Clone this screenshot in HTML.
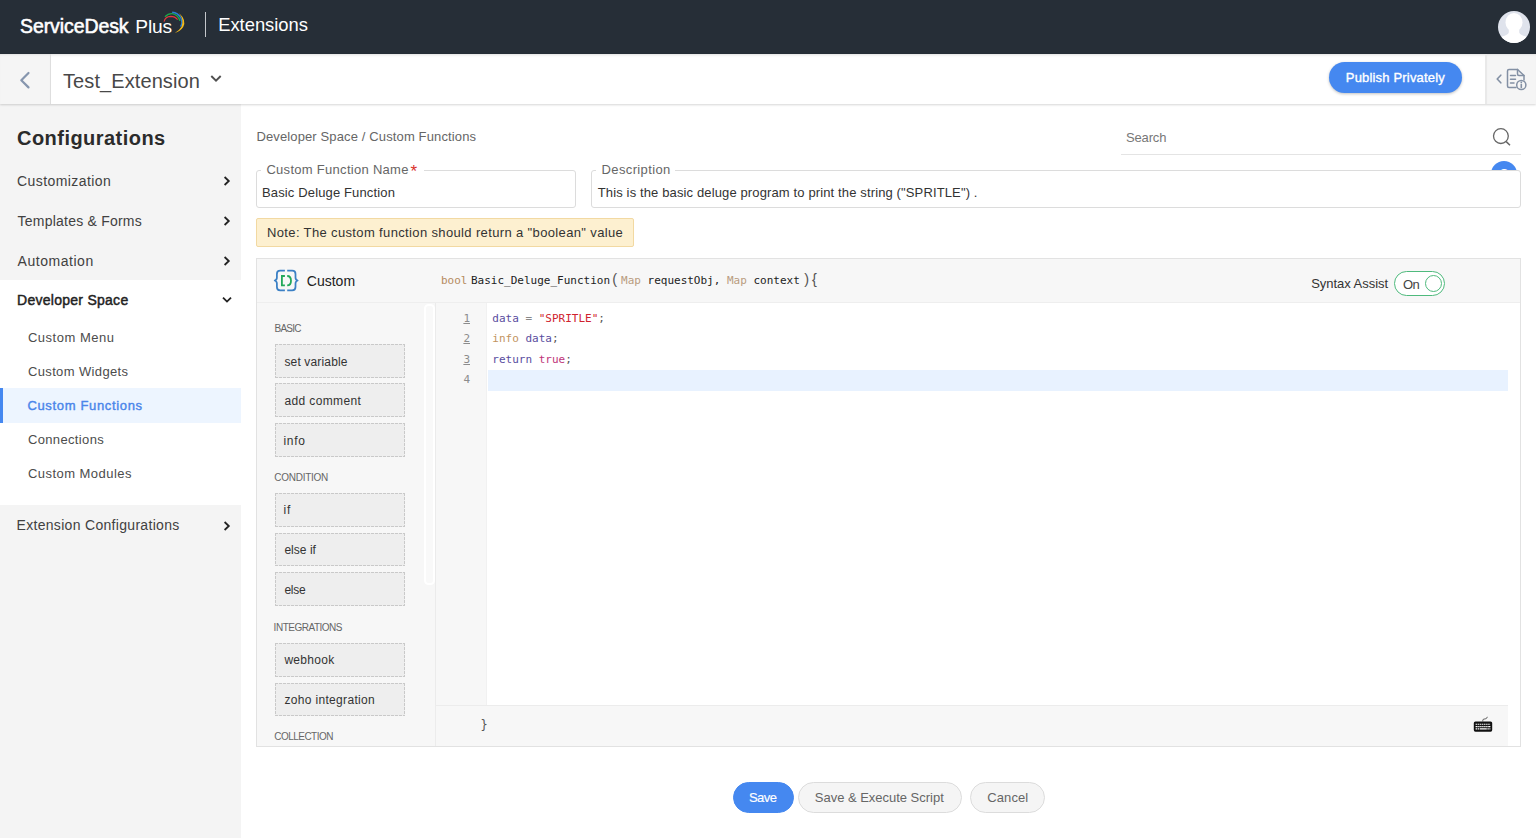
<!DOCTYPE html>
<html lang="en">
<head>
<meta charset="utf-8">
<title>ServiceDesk Plus - Extensions</title>
<style>
*{box-sizing:border-box;margin:0;padding:0}
html,body{width:1536px;height:838px;overflow:hidden;background:#fff}
body{font-family:"Liberation Sans",sans-serif;font-size:13px;color:#333;position:relative}
.abs{position:absolute}
.t{position:absolute;white-space:nowrap;line-height:1}
/* header */
#hdr{position:absolute;left:0;top:0;width:1536px;height:54px;background:#262e37}
#t-sd{left:20px;top:16px;font-size:19.5px;color:#fff;-webkit-text-stroke:.55px #fff}
#t-plus{left:135px;top:16px;font-size:19.2px;color:#fff}
#hdr .div{position:absolute;left:204.7px;top:12px;width:1.4px;height:25px;background:#c4c7cb}
#t-ext{left:218px;top:15px;font-size:18.4px;color:#fff}
#avatar{position:absolute;left:1498px;top:11px;width:32px;height:32px;border-radius:50%;background:#dfe3ec;overflow:hidden}
/* subheader */
#sub{position:absolute;left:0;top:54px;width:1536px;height:50px;background:#fff;box-shadow:0 1px 2px rgba(0,0,0,.16),inset 0 3px 3px -2px rgba(0,0,0,.13);z-index:5}
#back{position:absolute;left:0;top:0;width:51px;height:50px;background:#f5f5f5;border-right:1px solid #dedede;box-shadow:inset 0 2px 2px -1px rgba(0,0,0,.08)}
#t-title{left:63px;top:16px;font-size:20px;color:#484848}
#pub{position:absolute;left:1329px;top:8px;width:133px;height:31px;border-radius:16px;background:#4588f0;box-shadow:0 1px 3px rgba(0,0,0,.25)}
#t-pub{left:16px;top:9px;font-size:13px;color:#fff;-webkit-text-stroke:.35px #fff}
#rpanel{position:absolute;left:1485px;top:0;width:51px;height:50px;background:#f5f5f5;border-left:2px solid #e9e9e9;box-shadow:inset 0 2px 2px -1px rgba(0,0,0,.08)}
/* sidebar */
#side{position:absolute;left:0;top:104px;width:241px;height:734px;padding-top:1px;background:#f4f4f4}
#t-conf{left:17px;top:24px;font-size:20px;font-weight:bold;color:#2b2b2b}
#side .m{left:17px;font-size:14px;color:#414141}
#side .s{left:28px;font-size:13px;color:#4c4c4c}
#side .white{position:absolute;left:0;top:176px;width:241px;height:225px;background:#fff}
#side .act{position:absolute;left:0;top:284px;width:241px;height:34.5px;background:#edf5ff;border-left:3px solid #4588f0}
.chev{position:absolute;left:221px;width:12px;height:12px}
/* main */
#main{position:absolute;left:241px;top:105px;width:1295px;height:733px;background:#fff}
#t-bc{left:15px;top:26px;font-size:13px;color:#666}
#t-srch{left:885px;top:26px;font-size:13px;color:#777}
#sline{position:absolute;left:880px;top:49px;width:400px;height:1px;background:#e4e4e4}
.fs{position:absolute;top:65px;height:38px;border:1px solid #dcdcdc;border-radius:3px;background:#fff}
.lg{position:absolute;top:-9px;left:4px;height:16px;background:#fff;font-size:13px;color:#666}
.lg .t{left:6px;top:1.5px}
.lg b.t{color:#d9302c;font-weight:normal;font-size:17px;left:149.5px;top:1px}
.fv{left:5px;top:16px;font-size:13px;color:#333}
#help{position:absolute;left:1250px;top:56px;width:26px;height:26px;border-radius:50%;background:#4588f0;color:#fff;font-size:15px;font-weight:bold;text-align:center;line-height:26px}
#note{position:absolute;left:15px;top:113px;width:378px;height:29px;background:#fdf0d0;border:1px solid #f2d9a2;border-radius:2px}
#t-note{left:10px;top:7px;font-size:13px;color:#333}
#ed{position:absolute;left:15px;top:153px;width:1265px;height:489px;border:1px solid #e2e2e2;background:#fff}
#edh{position:absolute;left:0;top:0;width:1263px;height:44px;background:#f7f7f7;border-bottom:1px solid #eee}
#t-cust{left:50px;top:14px;font-size:14px;color:#222}
.mono{font-family:"DejaVu Sans Mono","Liberation Mono",monospace;font-size:11px}
#sig{position:absolute;left:184px;top:13.2px;line-height:14px;white-space:nowrap;color:#222}
#sig i{font-style:normal}
.kw{color:#b58a5e}.ty{color:#b99c80}.pn{color:#555;font-size:14.5px;font-family:"Liberation Sans",sans-serif}
#t-sa{left:1054px;top:17px;font-size:13px;color:#333}
#tog{position:absolute;left:1137px;top:12px;width:51px;height:25px;border:1px solid #4fba7d;border-radius:13px;background:#fff}
#t-on{left:8px;top:6px;font-size:13px;color:#444}
#tog i{position:absolute;left:30px;top:3px;width:17px;height:17px;border:1px solid #4fba7d;border-radius:50%;background:#fff}
#pal{position:absolute;left:0;top:44px;width:178px;height:443px;background:#f7f7f7;overflow:hidden}
#pal .gl{left:17px;font-size:10px;color:#666}
#pal .it{position:absolute;left:18px;width:130px;height:33.5px;background:repeating-linear-gradient(90deg,#c9c9c9 0 2.6px,transparent 2.6px 4px) 0 0/100% 1px no-repeat,repeating-linear-gradient(90deg,#c9c9c9 0 2.6px,transparent 2.6px 4px) 0 100%/100% 1px no-repeat,repeating-linear-gradient(180deg,#c9c9c9 0 2.6px,transparent 2.6px 4px) 0 0/1px 100% no-repeat,repeating-linear-gradient(180deg,#c9c9c9 0 2.6px,transparent 2.6px 4px) 100% 0/1px 100% no-repeat,#eee}
#pal .it .t{left:9px;top:11px;font-size:12px;color:#333}
#strack{position:absolute;left:166.5px;top:.5px;width:11.5px;height:281px;background:#f9f9f9;border:2px solid #fff;border-radius:4.5px}
#gut{position:absolute;left:178px;top:44px;width:52px;height:403px;background:#f7f7f7;border-left:1px solid #ebebeb;border-right:1px solid #f1f1f1}
#gut span{position:absolute;right:16px;color:#8c8c8c;line-height:13px}
#gut u{text-decoration:underline;text-underline-offset:.6px}
#code{position:absolute;left:230px;top:44px;width:1021px;height:403px;background:#fff}
#code .ln{position:absolute;left:5.3px;line-height:13px;white-space:nowrap}
#code .hl{position:absolute;left:1px;top:67px;width:1020px;height:20.8px;background:#e8f2ff}
#edf{position:absolute;left:178px;top:446px;width:1073px;height:41px;background:#f7f7f7;border-top:1px solid #ececec;border-left:1px solid #ececec}
.btn{position:absolute;top:677px;height:31px;border-radius:16px;border:1px solid #dcdcdc;background:#f5f5f5}
.btn .t{top:8px;font-size:13px;color:#666}

#t-sd{letter-spacing:-0.09px;margin-left:0.0px;margin-top:0.8px}
#t-plus{letter-spacing:-0.20px;margin-left:0.3px;margin-top:0.8px}
#t-ext{letter-spacing:-0.02px;margin-left:0.2px;margin-top:1.0px}
#t-title{letter-spacing:0.09px;margin-left:0.0px;margin-top:0.5px}
#t-pub{letter-spacing:0.18px;margin-left:0.8px;margin-top:0.0px}
#t-conf{letter-spacing:0.46px;margin-left:0.0px;margin-top:-0.1px}
#t-m1{letter-spacing:0.43px;margin-left:0.0px;margin-top:1.0px}
#t-m2{letter-spacing:0.23px;margin-left:0.5px;margin-top:1.0px}
#t-m3{letter-spacing:0.54px;margin-left:0.5px;margin-top:0.6px}
#t-m4{letter-spacing:0.27px;margin-left:0.0px;margin-top:0.8px}
#t-s1{letter-spacing:0.51px;margin-left:-0.1px;margin-top:1.5px}
#t-s2{letter-spacing:0.37px;margin-left:-0.1px;margin-top:1.5px}
#t-s3{letter-spacing:0.66px;margin-left:-0.6px;margin-top:1.7px}
#t-s4{letter-spacing:0.36px;margin-left:-0.1px;margin-top:1.0px}
#t-s5{letter-spacing:0.46px;margin-left:-0.1px;margin-top:1.5px}
#t-m5{letter-spacing:0.31px;margin-left:-0.5px;margin-top:1.1px}
#t-bc{letter-spacing:0.13px;margin-left:0.4px;margin-top:-0.6px}
#t-srch{letter-spacing:-0.15px;margin-left:0.0px;margin-top:-0.3px}
#t-lg1{letter-spacing:0.29px;margin-left:-0.6px;margin-top:-0.3px}
#t-fv1{letter-spacing:0.14px;margin-left:0.0px;margin-top:-1.1px}
#t-lg2{letter-spacing:0.36px;margin-left:-0.4px;margin-top:-0.2px}
#t-fv2{letter-spacing:0.13px;margin-left:0.8px;margin-top:-1.1px}
#t-note{letter-spacing:0.36px;margin-left:0.0px;margin-top:-0.3px}
#t-cust{letter-spacing:0.00px;margin-left:-0.2px;margin-top:1.0px}
#t-sa{letter-spacing:-0.03px;margin-left:0.2px;margin-top:0.5px}
#t-on{letter-spacing:-0.72px;margin-left:0.0px;margin-top:-0.2px}
#t-g1{letter-spacing:-0.81px;margin-left:0.6px;margin-top:1.6px}
#t-g2{letter-spacing:-0.25px;margin-left:0.2px;margin-top:1.9px}
#t-g3{letter-spacing:-0.49px;margin-left:-0.4px;margin-top:2.0px}
#t-g4{letter-spacing:-0.52px;margin-left:0.2px;margin-top:1.6px}
#t-i1{letter-spacing:0.16px;margin-left:0.4px;margin-top:0.8px}
#t-i2{letter-spacing:0.38px;margin-left:0.4px;margin-top:0.9px}
#t-i3{letter-spacing:0.72px;margin-left:-0.6px;margin-top:0.5px}
#t-i4{letter-spacing:0.90px;margin-left:-0.6px;margin-top:0.3px}
#t-i5{letter-spacing:0.03px;margin-left:0.4px;margin-top:0.1px}
#t-i6{letter-spacing:-0.27px;margin-left:0.4px;margin-top:0.5px}
#t-i7{letter-spacing:0.30px;margin-left:0.4px;margin-top:0.4px}
#t-i8{letter-spacing:0.33px;margin-left:0.4px;margin-top:0.7px}
#t-b1{letter-spacing:-0.59px;margin-left:-1.0px;margin-top:0.0px}
#t-b2{letter-spacing:-0.02px;margin-left:-0.2px;margin-top:0.0px}
#t-b3{letter-spacing:0.11px;margin-left:-0.8px;margin-top:0.0px}
</style>
</head>
<body>
<div id="hdr">
  <span class="t" id="t-sd">ServiceDesk</span><span class="t" id="t-plus">Plus</span>
  <svg class="abs" style="left:160px;top:8px" width="30" height="30" viewBox="160 8 30 30"><path d="M164 21.6 Q165.3 16.6 170.8 16.4 Q175 16.4 177.6 19.6" fill="none" stroke="#e8383d" stroke-width="1.1"/><path d="M165 16.7 Q168 13.4 172.2 13.6 Q178.2 14.6 180 20.9" fill="none" stroke="#1da64a" stroke-width="1.4"/><path d="M172.2 12.3 Q178 12.8 180.9 18 Q183 23 180.6 26.6" fill="none" stroke="#2a7fd4" stroke-width="1.4"/><path d="M179 12.9 Q186.8 20 183.2 27 Q180.2 31.6 174.8 33 Q179.4 30.4 181.6 26.4 Q184.2 20 179 12.9Z" fill="#f2b91a"/></svg>
  <div class="div"></div>
  <span class="t" id="t-ext">Extensions</span>
  <div id="avatar"><svg width="32" height="32" viewBox="0 0 32 32"><ellipse cx="16" cy="11.4" rx="8.5" ry="9.3" fill="#fff"/><path d="M10.8 18 L10.8 21.5 Q10 24.2 4 25.6 L1 27 L1 34 L31 34 L31 27 L28 25.6 Q22 24.2 21.2 21.5 L21.2 18 Z" fill="#fff"/></svg></div>
</div>
<div id="sub">
  <div id="back"><svg class="abs" style="left:18px;top:15px" width="14" height="22" viewBox="0 0 14 22"><path d="M10.5 4 L3.3 11.2 L10.5 18.4" fill="none" stroke="#8696ae" stroke-width="2.2" stroke-linecap="round" stroke-linejoin="round"/></svg></div>
  <span class="t" id="t-title">Test_Extension</span>
  <svg class="abs" style="left:208.5px;top:20px" width="14" height="10" viewBox="0 0 14 10"><path d="M2.3 2 L7 6.7 L11.7 2" fill="none" stroke="#505050" stroke-width="1.9"/></svg>
  <div id="pub"><span class="t" id="t-pub">Publish Privately</span></div>
  <div id="rpanel"><svg class="abs" style="left:6.3px;top:12.4px" width="36" height="26" viewBox="0 0 36 26"><g fill="none" stroke="#8390a4" stroke-width="1.5" stroke-linejoin="round" stroke-linecap="round"><path d="M7.8 9.2 L4.2 13 L7.8 16.8" stroke-width="1.6"/><path d="M24.5 3.5 H16 Q14.5 3.5 14.5 5 V20 Q14.5 21.5 16 21.5 H23"/><path d="M24.5 3.5 L31 9.5 V14"/><path d="M24.5 3.5 V8 Q24.5 9.5 26 9.5 H31"/><path d="M17.5 9.5 H22.5 M17.5 13.2 H22.5 M17.5 17 H21"/><circle cx="28.3" cy="19" r="4.6" fill="#f5f5f5"/><path d="M28.3 18.5 V21.5" stroke-width="1.6"/><path d="M28.3 16.3 V16.4" stroke-width="1.7"/></g></svg></div>
</div>
<div id="side">
  <span class="t" id="t-conf">Configurations</span>
  <span class="t m" id="t-m1" style="top:69px">Customization</span>
  <span class="t m" id="t-m2" style="top:109px">Templates &amp; Forms</span>
  <span class="t m" id="t-m3" style="top:149px">Automation</span>
  <div class="white"></div>
  <svg class="chev" style="top:70.6px" viewBox="0 0 12 12"><path d="M3.6 2 L7.8 6 L3.6 10" fill="none" stroke="#222" stroke-width="1.8"/></svg>
  <svg class="chev" style="top:110.6px" viewBox="0 0 12 12"><path d="M3.6 2 L7.8 6 L3.6 10" fill="none" stroke="#222" stroke-width="1.8"/></svg>
  <svg class="chev" style="top:150.7px" viewBox="0 0 12 12"><path d="M3.6 2 L7.8 6 L3.6 10" fill="none" stroke="#222" stroke-width="1.8"/></svg>
  <svg class="chev" style="top:415.5px" viewBox="0 0 12 12"><path d="M3.6 2 L7.8 6 L3.6 10" fill="none" stroke="#222" stroke-width="1.8"/></svg>
  <svg class="chev" style="top:190.4px" viewBox="0 0 12 12"><path d="M2 3.6 L6 7.6 L10 3.6" fill="none" stroke="#222" stroke-width="1.8"/></svg>
  <span class="t m" id="t-m4" style="top:188px;-webkit-text-stroke:.45px #222;color:#222">Developer Space</span>
  <span class="t s" id="t-s1" style="top:225px">Custom Menu</span>
  <span class="t s" id="t-s2" style="top:259px">Custom Widgets</span>
  <div class="act"></div>
  <span class="t s" id="t-s3" style="top:293px;color:#4a85ea;-webkit-text-stroke:.4px #4a85ea">Custom Functions</span>
  <span class="t s" id="t-s4" style="top:328px">Connections</span>
  <span class="t s" id="t-s5" style="top:361px">Custom Modules</span>
  <span class="t m" id="t-m5" style="top:413px">Extension Configurations</span>
</div>
<div id="main">
  <span class="t" id="t-bc">Developer Space / Custom Functions</span>
  <span class="t" id="t-srch">Search</span>
  <div id="sline"></div>
  <svg class="abs" style="left:1249px;top:20px" width="24" height="24" viewBox="0 0 24 24"><circle cx="10.9" cy="11.1" r="7.4" fill="none" stroke="#666" stroke-width="1.3"/><path d="M16.2 16.6 L20 20.2" stroke="#666" stroke-width="1.5" fill="none"/></svg>
  <div id="help">?</div>
  <div class="fs" style="left:15px;width:320px"><div class="lg" style="width:163px"><span class="t" id="t-lg1">Custom Function Name</span><b class="t">*</b></div><span class="t fv" id="t-fv1">Basic Deluge Function</span></div>
  <div class="fs" style="left:350px;width:930px"><div class="lg" style="width:79px"><span class="t" id="t-lg2">Description</span></div><span class="t fv" id="t-fv2">This is the basic deluge program to print the string ("SPRITLE") .</span></div>
  <div id="note"><span class="t" id="t-note">Note: The custom function should return a "boolean" value</span></div>
  <div id="ed">
    <div id="edh">
      <svg class="abs" style="left:16px;top:10px" width="27" height="24" viewBox="0 0 27 24"><g fill="none" stroke="#3b80c5" stroke-width="1.75" stroke-linecap="butt" stroke-linejoin="round"><path d="M11.9 1.6 H7.2 Q3.9 1.6 3.9 4.9 V8.4 Q3.9 10.8 1.7 11.5 Q3.9 12.2 3.9 14.6 V18.1 Q3.9 21.4 7.2 21.4 H11.9"/><path d="M14.2 1.6 H19.2 Q22.5 1.6 22.5 4.9 V8.4 Q22.5 10.8 24.7 11.5 Q22.5 12.2 22.5 14.6 V18.1 Q22.5 21.4 19.2 21.4 H14.2"/></g><g fill="none" stroke="#22a85a" stroke-width="1.8" stroke-linejoin="miter"><path d="M11.9 7 H8.9 V16.4 H11.9"/><path d="M14.2 7 Q18 7 18 11.7 Q18 16.4 14.2 16.4"/></g></svg>
      <span class="t" id="t-cust">Custom</span>
      <div id="sig" class="mono"><i class="kw">bool</i><i style="margin-left:3.5px">Basic_Deluge_Function</i><i class="pn" style="margin-left:2.1px">(</i><i class="ty" style="margin-left:4px">Map</i> requestObj, <i class="ty">Map</i> context<i class="pn" style="margin-left:4.4px">)</i><i class="pn" style="margin-left:2.8px">{</i></div>
      <span class="t" id="t-sa">Syntax Assist</span>
      <div id="tog"><span class="t" id="t-on">On</span><i></i></div>
    </div>
    <div id="pal">
      <div id="strack"></div>
      <span class="t gl" id="t-g1" style="top:19px">BASIC</span>
      <div class="it" style="top:41px"><span class="t" id="t-i1">set variable</span></div>
      <div class="it" style="top:80.2px"><span class="t" id="t-i2">add comment</span></div>
      <div class="it" style="top:120px"><span class="t" id="t-i3">info</span></div>
      <span class="t gl" id="t-g2" style="top:168px">CONDITION</span>
      <div class="it" style="top:190px"><span class="t" id="t-i4">if</span></div>
      <div class="it" style="top:229.6px"><span class="t" id="t-i5">else if</span></div>
      <div class="it" style="top:269.2px"><span class="t" id="t-i6">else</span></div>
      <span class="t gl" id="t-g3" style="top:318px">INTEGRATIONS</span>
      <div class="it" style="top:340px"><span class="t" id="t-i7">webhook</span></div>
      <div class="it" style="top:379.5px"><span class="t" id="t-i8">zoho integration</span></div>
      <span class="t gl" id="t-g4" style="top:427px">COLLECTION</span>
    </div>
    <div id="gut" class="mono"><span style="top:8.5px"><u>1</u></span><span style="top:29.3px"><u>2</u></span><span style="top:50.1px"><u>3</u></span><span style="top:70.1px">4</span></div>
    <div id="code" class="mono">
      <div class="hl"></div>
      <div class="ln" style="top:8.5px"><span style="color:#5a4da0">data</span> <span style="color:#888">=</span> <span style="color:#d0222d">"SPRITLE"</span><span style="color:#555">;</span></div>
      <div class="ln" style="top:29.3px"><span style="color:#c2935f">info</span> <span style="color:#5a4da0">data</span><span style="color:#555">;</span></div>
      <div class="ln" style="top:50.1px"><span style="color:#5a4da0">return</span> <span style="color:#c0357a">true</span><span style="color:#555">;</span></div>
    </div>
    <div id="edf"><span class="t mono" style="left:44.5px;top:12.5px;font-size:12px;color:#555">}</span>
      <svg class="abs" style="left:1036.6px;top:10px" width="20" height="17" viewBox="0 0 20 17"><path d="M9.8 5.5 V4 Q9.8 3.3 11 3.1 L13 2.7 Q14 2.4 14.3 .8" fill="none" stroke="#444" stroke-width=".8"/><rect x=".8" y="5.4" width="18.4" height="10.3" rx="1.6" fill="#111"/><g stroke="#fff" stroke-width="1.1" fill="none"><path d="M2.6 8.3 H17.4" stroke-dasharray="1.5 .6"/><path d="M2.6 10.6 H17.4" stroke-dasharray="2 .6 1.4 .6 1.4 .6 1.4 .6 1.4 .6 1.4 .6 2.2"/><path d="M2.6 12.9 H17.4" stroke-dasharray="1.4 .6 1.4 .6 7.2 .6 1.4 .6 1.4"/></g></svg>
    </div>
  </div>
  <div class="btn" style="left:492px;width:61px;background:#4588f0;border-color:#4588f0"><span class="t" id="t-b1" style="left:16px;color:#fff;-webkit-text-stroke:.15px #fff">Save</span></div>
  <div class="btn" style="left:557px;width:164px"><span class="t" id="t-b2" style="left:16px">Save &amp; Execute Script</span></div>
  <div class="btn" style="left:729px;width:75px"><span class="t" id="t-b3" style="left:17px">Cancel</span></div>
</div>

</body>
</html>
